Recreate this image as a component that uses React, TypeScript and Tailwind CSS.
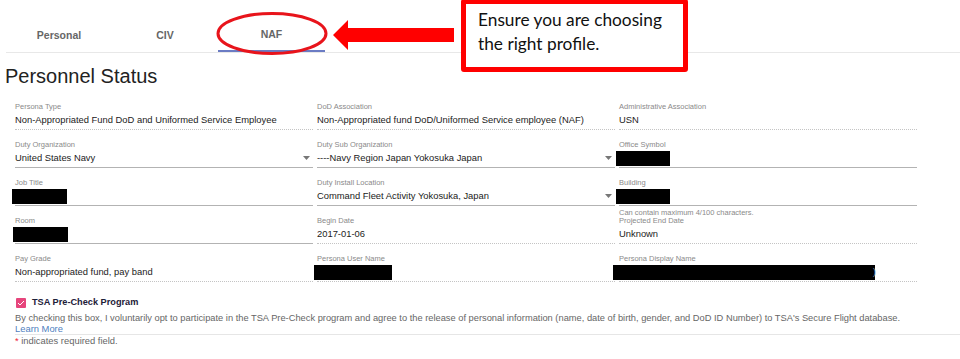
import React from "react";

type Line = "dotted" | "solid";

type Field = {
  label: string;
  value?: string;
  redact?: { w: number; ml: number };
  line: Line;
  arrow?: boolean;
  helper?: string;
  tail?: boolean;
};

const fields: Field[] = [
  { label: "Persona Type", value: "Non-Appropriated Fund DoD and Uniformed Service Employee", line: "dotted" },
  { label: "DoD Association", value: "Non-Appropriated fund DoD/Uniformed Service employee (NAF)", line: "dotted" },
  { label: "Administrative Association", value: "USN", line: "dotted" },

  { label: "Duty Organization", value: "United States Navy", line: "solid", arrow: true },
  { label: "Duty Sub Organization", value: "----Navy Region Japan Yokosuka Japan", line: "solid", arrow: true },
  { label: "Office Symbol", redact: { w: 54, ml: -3 }, line: "solid" },

  { label: "Job Title", redact: { w: 55, ml: -3 }, line: "solid" },
  { label: "Duty Install Location", value: "Command Fleet Activity Yokosuka, Japan", line: "solid", arrow: true },
  { label: "Building", redact: { w: 54, ml: -3 }, line: "solid", helper: "Can contain maximum 4/100 characters." },

  { label: "Room", redact: { w: 55, ml: -2 }, line: "solid" },
  { label: "Begin Date", value: "2017-01-06", line: "dotted" },
  { label: "Projected End Date", value: "Unknown", line: "dotted" },

  { label: "Pay Grade", value: "Non-appropriated fund, pay band", line: "dotted" },
  { label: "Persona User Name", redact: { w: 78, ml: -3 }, line: "dotted" },
  { label: "Persona Display Name", redact: { w: 262, ml: -6 }, line: "dotted", tail: true },
];

function Caret() {
  return (
    <svg width="7" height="4" viewBox="0 0 7 4" className="shrink-0">
      <path d="M0 0 L7 0 L3.5 4 Z" fill="#777" />
    </svg>
  );
}

function FieldCell({ f }: { f: Field }) {
  return (
    <div className="h-[38px] flex flex-col">
      <div className="h-[10px] text-[7.5px] leading-[10px] text-[#8a8a8a] whitespace-nowrap">{f.label}</div>
      <div className="mt-[2px] h-[12px] flex items-center justify-between pr-[3px] text-[9.4px] leading-[12px] text-[#222]">
        {f.redact ? (
          <div className="flex items-center">
            <div className="h-[15px] bg-black" style={{ width: f.redact.w, marginLeft: f.redact.ml }} />
            {f.tail && <span className="-ml-[2px] text-[9px] text-[#7f97b8]">)</span>}
          </div>
        ) : (
          <span className="whitespace-nowrap">{f.value}</span>
        )}
        {f.arrow && <Caret />}
      </div>
      <div
        className={
          f.line === "solid"
            ? "mt-[3px] border-b border-[#b3b3b3]"
            : "mt-[3px] border-b border-dotted border-[#c4c4c4]"
        }
      />
      {f.helper && (
        <div className="h-0 overflow-visible">
          <div className="mt-[3px] text-[7.5px] leading-[8px] text-[#8a8a8a] whitespace-nowrap">{f.helper}</div>
        </div>
      )}
    </div>
  );
}

export default function App() {
  const tabs = ["Personal", "CIV", "NAF"];

  return (
    <div className="relative w-[960px] h-[359px] bg-white overflow-hidden font-['Liberation_Sans',Arial,sans-serif]">
      {/* Tabs */}
      <div className="pt-[20px] pl-[6px]">
        <div className="flex border-b border-[#e8e8e8]">
          {tabs.map((t) => (
            <div
              key={t}
              className={
                t === "NAF"
                  ? "w-[107px] h-[32px] -mb-px flex items-center justify-center border-b-[2px] border-[#6b7cc4] text-[10.5px] font-bold text-[#666]"
                  : "w-[106px] h-[32px] flex items-center justify-center text-[10.5px] font-bold text-[#666]"
              }
            >
              {t}
            </div>
          ))}
        </div>
      </div>

      {/* Heading */}
      <h1 className="mt-[11px] pl-[5px] text-[20px] leading-[24px] text-[#222]">Personnel Status</h1>

      {/* Fields */}
      <div className="mt-[14px] pl-[15px] grid grid-cols-[298px_298px_298px] gap-x-[4px]">
        {fields.map((f) => (
          <FieldCell key={f.label} f={f} />
        ))}
      </div>

      {/* TSA */}
      <div className="mt-[5px] pl-[15px]">
        <div className="h-[12px] flex items-center gap-[6px]">
          <div className="ml-[1px] w-[10px] h-[10px] rounded-[1px] bg-[#e6457c] flex items-center justify-center">
            <svg width="8" height="6" viewBox="0 0 8 6">
              <path d="M1 3 L3 5 L7 1" stroke="white" strokeWidth="1" fill="none" />
            </svg>
          </div>
          <span className="text-[9.2px] font-bold text-[#1d2038]">TSA Pre-Check Program</span>
        </div>
        <p className="mt-[4px] text-[9.3px] leading-[11px] text-[#666] whitespace-nowrap">
          By checking this box, I voluntarily opt to participate in the TSA Pre-Check program and agree to the release of
          personal information (name, date of birth, gender, and DoD ID Number) to TSA's Secure Flight database.
        </p>
        <div className="h-[10px] text-[9.4px] leading-[10px] text-[#4f7fc0]">Learn More</div>
        <div className="border-t border-[#e6e6e6] text-[9.4px] leading-[11px] text-[#666]">
          <span className="text-[#e23]">*</span> indicates required field.
        </div>
      </div>

      {/* Annotation: ellipse */}
      <svg className="absolute left-[215px] top-[11px]" width="114" height="45" viewBox="0 0 114 45">
        <ellipse cx="57" cy="22.5" rx="54" ry="20" fill="none" stroke="#e8141b" strokeWidth="3" />
      </svg>

      {/* Annotation: arrow */}
      <svg className="absolute left-[333px] top-[20px]" width="121" height="30" viewBox="0 0 121 30">
        <polygon points="0,15 15,0 15,8 121,8 121,22 15,22 15,30" fill="#ff0000" />
      </svg>

      {/* Annotation: note box */}
      <div className="absolute left-[461px] top-[-1px] w-[227px] h-[73px] border-[5px] border-[#ff0000] rounded-[3px] bg-white pl-[12px] pt-[4px]">
        <div className="font-['Lato',sans-serif] text-[17.3px] leading-[24px] text-[#111]">
          Ensure you are choosing
          <br />
          the right profile.
        </div>
      </div>
    </div>
  );
}
